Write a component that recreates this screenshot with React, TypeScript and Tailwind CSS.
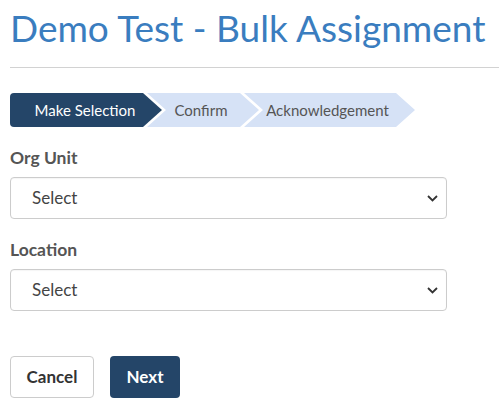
import React from "react";

const steps = [
  { name: "Make Selection", width: "w-[152px]" },
  { name: "Confirm", width: "w-[112px]" },
  { name: "Acknowledgement", width: "w-[171px]" },
];

const Chevron: React.FC = () => (
  <svg width="11" height="7" viewBox="0 0 11 7" fill="none" className="shrink-0">
    <path d="M1 1l4.5 4.5L10 1" stroke="#333" strokeWidth="1.8" />
  </svg>
);

const SelectField: React.FC<{ label: string }> = ({ label }) => (
  <div className="flex flex-col gap-[7px]">
    <label className="block h-6 text-[17.5px] leading-6 font-bold text-[#555]">{label}</label>
    <div className="w-[437px] h-[42px] flex items-center justify-between pl-[21px] pr-[8px] bg-white border border-[#ccc] rounded-[4px] shadow-[inset_0_1px_1px_rgba(0,0,0,0.04)]">
      <span className="text-[17px] text-[#444]">Select</span>
      <Chevron />
    </div>
  </div>
);

export default function App() {
  return (
    <div className="bg-white min-h-[417px] px-[10px] pt-[5px] flex flex-col font-['Lato',sans-serif]">
      <h1 className="text-[37px] leading-[45px] font-normal whitespace-nowrap text-[#3a7dbf]">Demo Test - Bulk Assignment</h1>
      <div className="mt-[17px] -mr-[10px] h-px bg-[#d2d2d2]" />

      <nav className="mt-[25px] flex h-[34px]">
        {steps.map((s, i) => (
          <div
            key={s.name}
            className={`${s.width} h-full flex items-center justify-center text-[15px] ${
              i === 0
                ? "bg-[#244568] text-white rounded-l-[4px] pr-[2px] [clip-path:polygon(0_0,calc(100%-19px)_0,100%_50%,calc(100%-19px)_100%,0_100%)]"
                : "bg-[#d6e2f6] text-[#555] -ml-[15px] pr-[4px] [clip-path:polygon(0_0,calc(100%-19px)_0,100%_50%,calc(100%-19px)_100%,0_100%,19px_50%)]"
            }`}
          >
            {s.name}
          </div>
        ))}
      </nav>

      <div className="mt-[19px] flex flex-col gap-[19px]">
        <SelectField label="Org Unit" />
        <SelectField label="Location" />
      </div>

      <div className="mt-[45px] flex gap-[16px]">
        <button className="w-[84px] h-[42px] bg-white border border-[#ccc] rounded-[4px] text-[17px] font-bold text-[#333]">
          Cancel
        </button>
        <button className="w-[70px] h-[42px] bg-[#244568] rounded-[4px] text-[17px] font-bold text-white">
          Next
        </button>
      </div>
    </div>
  );
}
